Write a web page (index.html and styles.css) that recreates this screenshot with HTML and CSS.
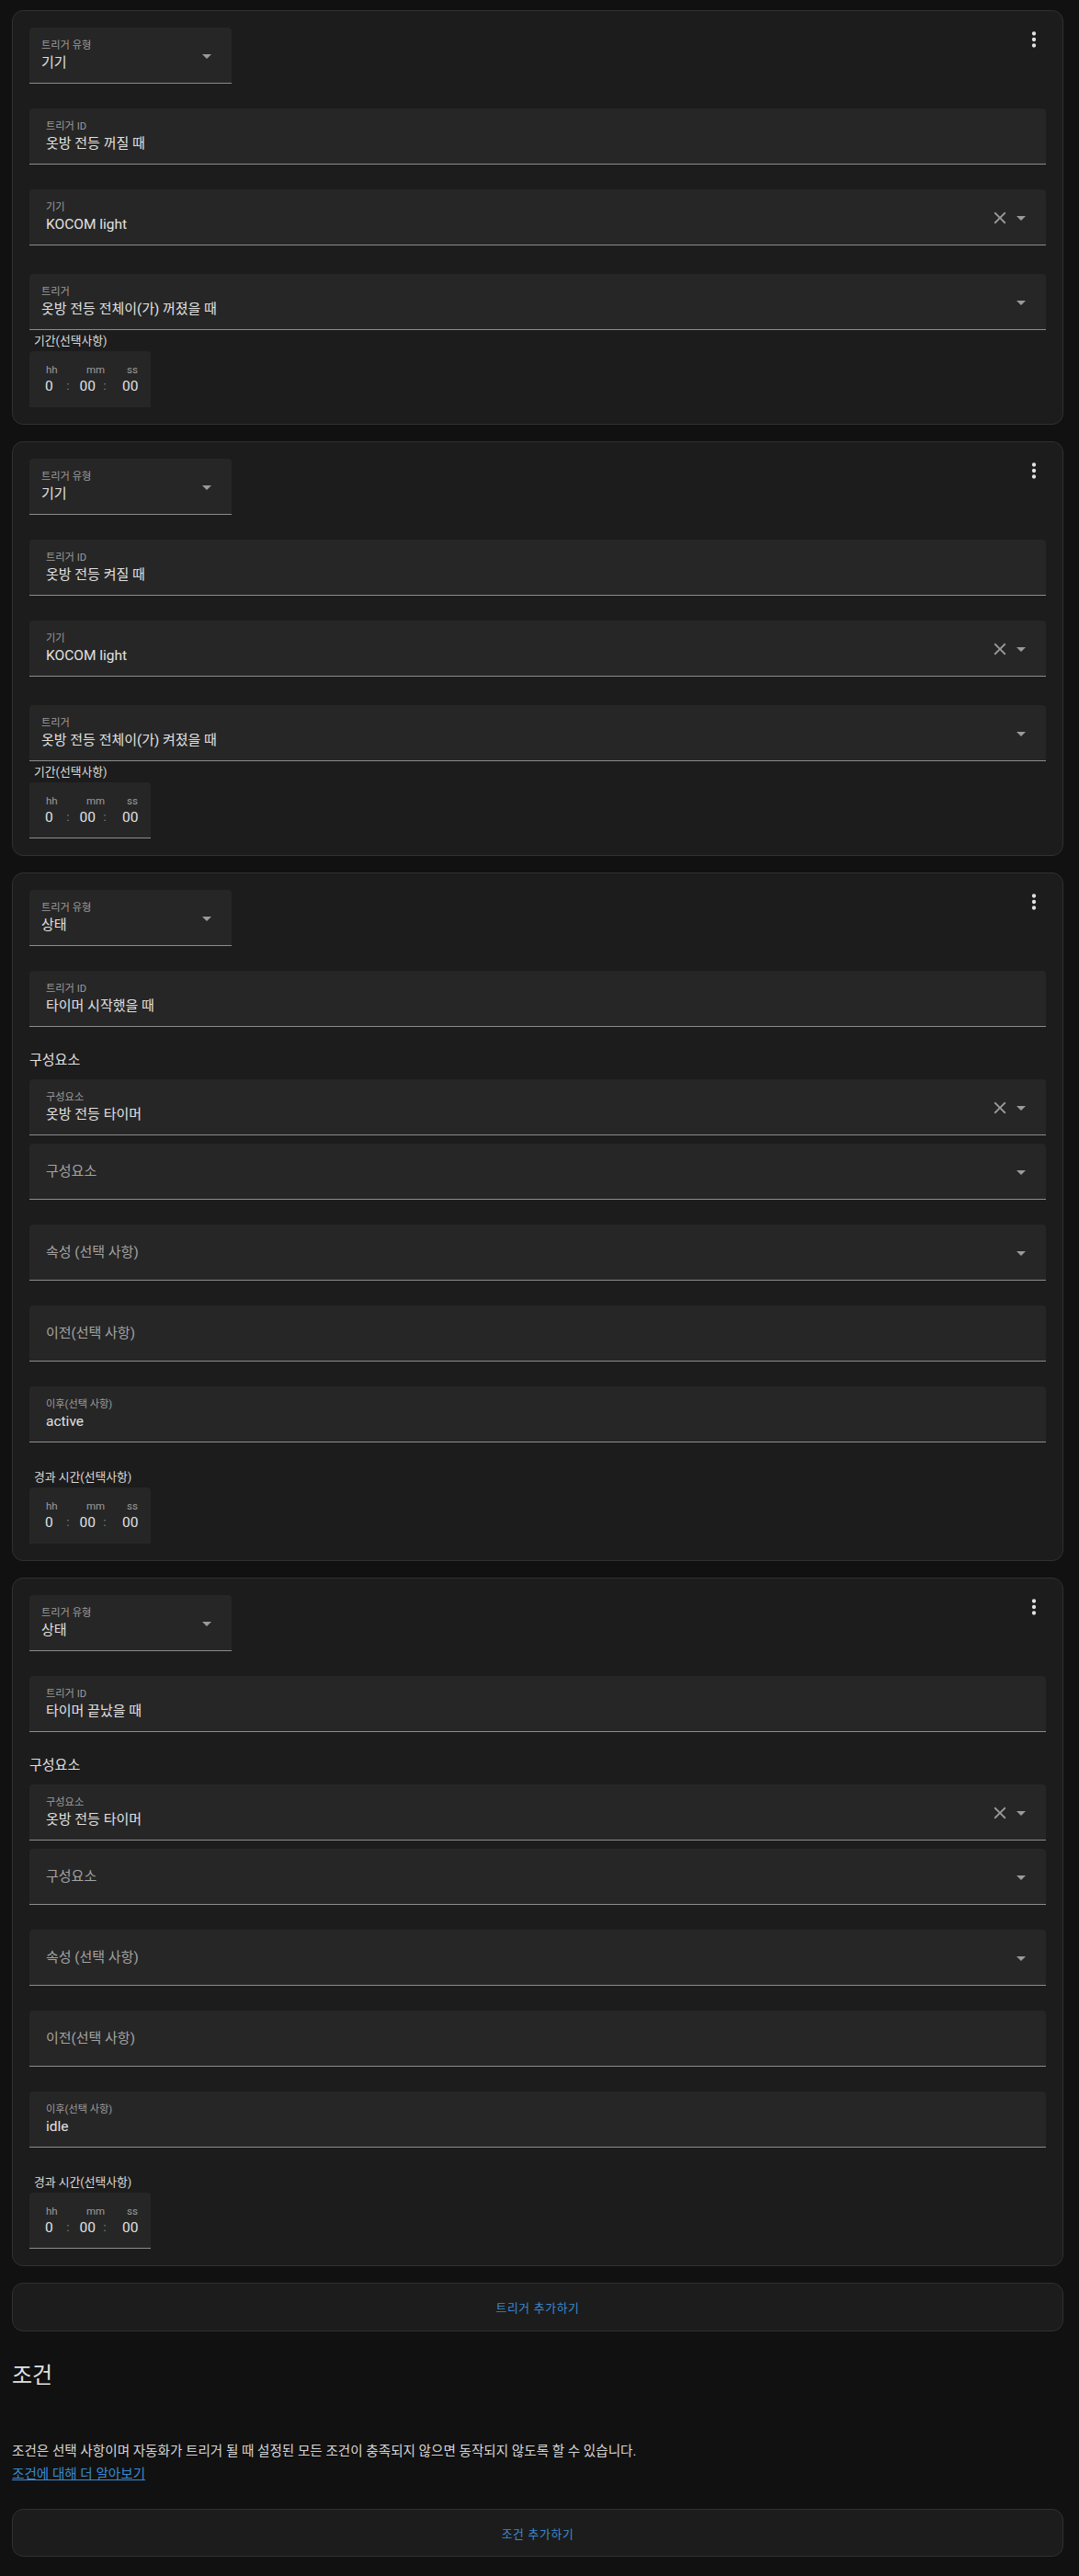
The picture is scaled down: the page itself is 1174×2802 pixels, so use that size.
FILE: index.html
```html
<!DOCTYPE html>
<html lang="ko">
<head>
<meta charset="utf-8">
<title>트리거</title>
<link rel="stylesheet" href="styles.css">
</head>
<body>
<div class="page">
  <div class="triggers">

    <div class="card">
      <div class="card-head">
        <div class="field select type-select">
          <div class="field-text"><span class="label">트리거 유형</span><span class="value ko">기기</span></div>
          <span class="icons"><svg class="arrow" viewBox="0 0 24 24"><path d="M7 10l5 5 5-5z"/></svg></span>
        </div>
        <svg class="menu" viewBox="0 0 24 24"><path d="M12 16a2 2 0 1 1 0 4 2 2 0 0 1 0-4m0-6a2 2 0 1 1 0 4 2 2 0 0 1 0-4m0-6a2 2 0 1 1 0 4 2 2 0 0 1 0-4z"/></svg>
      </div>
      <div class="field">
        <div class="field-text"><span class="label">트리거 ID</span><span class="value ko">옷방 전등 꺼질 때</span></div>
      </div>
      <div class="field">
        <div class="field-text"><span class="label">기기</span><span class="value">KOCOM light</span></div>
        <span class="icons"><svg class="close" viewBox="0 0 24 24"><path d="M19 6.41 17.59 5 12 10.590 6.41 5 5 6.41 10.59 12 5 17.59 6.41 19 12 13.41 17.59 19 19 17.59 13.41 12z"/></svg><svg class="arrow" viewBox="0 0 24 24"><path d="M7 10l5 5 5-5z"/></svg></span>
      </div>
      <div class="field select loose">
        <div class="field-text"><span class="label">트리거</span><span class="value ko">옷방 전등 전체이(가) 꺼졌을 때</span></div>
        <span class="icons"><svg class="arrow" viewBox="0 0 24 24"><path d="M7 10l5 5 5-5z"/></svg></span>
      </div>
      <div class="dur-label">기간(선택사항)</div>
      <div class="dur">
        <div class="unit hh"><span class="u-label">hh</span><span class="u-val">0</span></div>
        <span class="sep">:</span>
        <div class="unit mm"><span class="u-label">mm</span><span class="u-val">00</span></div>
        <span class="sep">:</span>
        <div class="unit ss"><span class="u-label">ss</span><span class="u-val">00</span></div>
      </div>
    </div>

    <div class="card">
      <div class="card-head">
        <div class="field select type-select">
          <div class="field-text"><span class="label">트리거 유형</span><span class="value ko">기기</span></div>
          <span class="icons"><svg class="arrow" viewBox="0 0 24 24"><path d="M7 10l5 5 5-5z"/></svg></span>
        </div>
        <svg class="menu" viewBox="0 0 24 24"><path d="M12 16a2 2 0 1 1 0 4 2 2 0 0 1 0-4m0-6a2 2 0 1 1 0 4 2 2 0 0 1 0-4m0-6a2 2 0 1 1 0 4 2 2 0 0 1 0-4z"/></svg>
      </div>
      <div class="field">
        <div class="field-text"><span class="label">트리거 ID</span><span class="value ko">옷방 전등 켜질 때</span></div>
      </div>
      <div class="field">
        <div class="field-text"><span class="label">기기</span><span class="value">KOCOM light</span></div>
        <span class="icons"><svg class="close" viewBox="0 0 24 24"><path d="M19 6.41 17.59 5 12 10.59 6.41 5 5 6.41 10.59 12 5 17.59 6.41 19 12 13.41 17.59 19 19 17.59 13.41 12z"/></svg><svg class="arrow" viewBox="0 0 24 24"><path d="M7 10l5 5 5-5z"/></svg></span>
      </div>
      <div class="field select loose">
        <div class="field-text"><span class="label">트리거</span><span class="value ko">옷방 전등 전체이(가) 켜졌을 때</span></div>
        <span class="icons"><svg class="arrow" viewBox="0 0 24 24"><path d="M7 10l5 5 5-5z"/></svg></span>
      </div>
      <div class="dur-label">기간(선택사항)</div>
      <div class="dur underlined">
        <div class="unit hh"><span class="u-label">hh</span><span class="u-val">0</span></div>
        <span class="sep">:</span>
        <div class="unit mm"><span class="u-label">mm</span><span class="u-val">00</span></div>
        <span class="sep">:</span>
        <div class="unit ss"><span class="u-label">ss</span><span class="u-val">00</span></div>
      </div>
    </div>

    <div class="card">
      <div class="card-head">
        <div class="field select type-select">
          <div class="field-text"><span class="label">트리거 유형</span><span class="value ko">상태</span></div>
          <span class="icons"><svg class="arrow" viewBox="0 0 24 24"><path d="M7 10l5 5 5-5z"/></svg></span>
        </div>
        <svg class="menu" viewBox="0 0 24 24"><path d="M12 16a2 2 0 1 1 0 4 2 2 0 0 1 0-4m0-6a2 2 0 1 1 0 4 2 2 0 0 1 0-4m0-6a2 2 0 1 1 0 4 2 2 0 0 1 0-4z"/></svg>
      </div>
      <div class="field">
        <div class="field-text"><span class="label">트리거 ID</span><span class="value ko">타이머 시작했을 때</span></div>
      </div>
      <div class="section-title">구성요소</div>
      <div class="field after-title">
        <div class="field-text"><span class="label">구성요소</span><span class="value ko">옷방 전등 타이머</span></div>
        <span class="icons"><svg class="close" viewBox="0 0 24 24"><path d="M19 6.41 17.59 5 12 10.59 6.41 5 5 6.41 10.59 12 5 17.59 6.41 19 12 13.41 17.59 19 19 17.59 13.41 12z"/></svg><svg class="arrow" viewBox="0 0 24 24"><path d="M7 10l5 5 5-5z"/></svg></span>
      </div>
      <div class="field tight">
        <div class="field-text placeholder"><span class="ph">구성요소</span></div>
        <span class="icons"><svg class="arrow" viewBox="0 0 24 24"><path d="M7 10l5 5 5-5z"/></svg></span>
      </div>
      <div class="field">
        <div class="field-text placeholder"><span class="ph">속성 (선택 사항)</span></div>
        <span class="icons"><svg class="arrow" viewBox="0 0 24 24"><path d="M7 10l5 5 5-5z"/></svg></span>
      </div>
      <div class="field">
        <div class="field-text placeholder"><span class="ph">이전(선택 사항)</span></div>
      </div>
      <div class="field">
        <div class="field-text"><span class="label">이후(선택 사항)</span><span class="value">active</span></div>
      </div>
      <div class="dur-label spaced">경과 시간(선택사항)</div>
      <div class="dur">
        <div class="unit hh"><span class="u-label">hh</span><span class="u-val">0</span></div>
        <span class="sep">:</span>
        <div class="unit mm"><span class="u-label">mm</span><span class="u-val">00</span></div>
        <span class="sep">:</span>
        <div class="unit ss"><span class="u-label">ss</span><span class="u-val">00</span></div>
      </div>
    </div>

    <div class="card">
      <div class="card-head">
        <div class="field select type-select">
          <div class="field-text"><span class="label">트리거 유형</span><span class="value ko">상태</span></div>
          <span class="icons"><svg class="arrow" viewBox="0 0 24 24"><path d="M7 10l5 5 5-5z"/></svg></span>
        </div>
        <svg class="menu" viewBox="0 0 24 24"><path d="M12 16a2 2 0 1 1 0 4 2 2 0 0 1 0-4m0-6a2 2 0 1 1 0 4 2 2 0 0 1 0-4m0-6a2 2 0 1 1 0 4 2 2 0 0 1 0-4z"/></svg>
      </div>
      <div class="field">
        <div class="field-text"><span class="label">트리거 ID</span><span class="value ko">타이머 끝났을 때</span></div>
      </div>
      <div class="section-title">구성요소</div>
      <div class="field after-title">
        <div class="field-text"><span class="label">구성요소</span><span class="value ko">옷방 전등 타이머</span></div>
        <span class="icons"><svg class="close" viewBox="0 0 24 24"><path d="M19 6.41 17.59 5 12 10.59 6.41 5 5 6.41 10.59 12 5 17.59 6.41 19 12 13.41 17.59 19 19 17.59 13.41 12z"/></svg><svg class="arrow" viewBox="0 0 24 24"><path d="M7 10l5 5 5-5z"/></svg></span>
      </div>
      <div class="field tight">
        <div class="field-text placeholder"><span class="ph">구성요소</span></div>
        <span class="icons"><svg class="arrow" viewBox="0 0 24 24"><path d="M7 10l5 5 5-5z"/></svg></span>
      </div>
      <div class="field">
        <div class="field-text placeholder"><span class="ph">속성 (선택 사항)</span></div>
        <span class="icons"><svg class="arrow" viewBox="0 0 24 24"><path d="M7 10l5 5 5-5z"/></svg></span>
      </div>
      <div class="field">
        <div class="field-text placeholder"><span class="ph">이전(선택 사항)</span></div>
      </div>
      <div class="field">
        <div class="field-text"><span class="label">이후(선택 사항)</span><span class="value">idle</span></div>
      </div>
      <div class="dur-label spaced">경과 시간(선택사항)</div>
      <div class="dur underlined">
        <div class="unit hh"><span class="u-label">hh</span><span class="u-val">0</span></div>
        <span class="sep">:</span>
        <div class="unit mm"><span class="u-label">mm</span><span class="u-val">00</span></div>
        <span class="sep">:</span>
        <div class="unit ss"><span class="u-label">ss</span><span class="u-val">00</span></div>
      </div>
    </div>

    <div class="add-btn">트리거 추가하기</div>
  </div>

  <div class="conditions">
    <h2 class="sec-heading">조건</h2>
    <p class="desc">조건은 선택 사항이며 자동화가 트리거 될 때 설정된 모든 조건이 충족되지 않으면 동작되지 않도록 할 수 있습니다.</p>
    <a class="learn" href="#">조건에 대해 더 알아보기</a>
    <div class="add-btn cond-btn">조건 추가하기</div>
  </div>
</div>
</body>
</html>
```

FILE: styles.css
```css
html, body {
  margin: 0;
  padding: 0;
  background: #111111;
}

body {
  font-family: Roboto, "Noto Sans CJK KR", sans-serif;
  color: #e1e1e1;
}

.page {
  padding: 11px 17px 21px 13px;
}

.triggers {
  display: flex;
  flex-direction: column;
  gap: 18px;
}

.card {
  background: #1c1c1c;
  border: 1px solid #303030;
  border-radius: 12px;
  padding: 18px;
  display: flex;
  flex-direction: column;
}

.card-head {
  display: flex;
  justify-content: space-between;
  align-items: flex-start;
}

.menu {
  width: 26px;
  height: 26px;
  fill: #e1e1e1;
  flex: none;
}

.field {
  display: flex;
  align-items: center;
  height: 61px;
  box-sizing: border-box;
  background: #262626;
  border-radius: 4px 4px 0 0;
  border-bottom: 1px solid #8c8c8c;
  padding: 0 15px 0 18px;
  margin-top: 27px;
}

.card-head .field {
  margin-top: 0;
}

.field.select {
  padding-left: 13px;
}

.field.loose {
  margin-top: 31px;
}

.field.tight {
  margin-top: 9px;
}

.field.after-title {
  margin-top: 11px;
}

.type-select {
  width: 220px;
}

.field-text {
  flex: 1;
  align-self: stretch;
  display: flex;
  flex-direction: column;
  padding-top: 12px;
  min-width: 0;
}

.field-text.placeholder {
  padding-top: 0;
  justify-content: center;
}

.label {
  font-size: 11.2px;
  line-height: 16px;
  color: #9c9c9c;
  white-space: nowrap;
}

.value {
  font-size: 15.5px;
  line-height: 20px;
  color: #e1e1e1;
  white-space: nowrap;
}

.value.ko {
  font-size: 15px;
}

.ph {
  font-size: 15px;
  line-height: 20px;
  color: #a3a3a3;
  white-space: nowrap;
}

.icons {
  display: flex;
  align-items: center;
  margin-top: 2px;
  flex: none;
}

.arrow {
  width: 24px;
  height: 24px;
  fill: #9a9a9a;
}

.close {
  width: 22px;
  height: 22px;
  fill: #9a9a9a;
}

.section-title {
  margin-top: 26px;
  font-size: 15px;
  line-height: 20px;
  color: #e1e1e1;
}

.dur-label {
  font-size: 12.8px;
  line-height: 23px;
  color: #dadada;
  padding-left: 5px;
}

.dur-label.spaced {
  margin-top: 26px;
}

.dur {
  display: flex;
  width: 132px;
  height: 61px;
  box-sizing: border-box;
  background: #262626;
  border-radius: 4px 4px 0 0;
}

.dur.underlined {
  border-bottom: 1px solid #8c8c8c;
}

.unit {
  display: flex;
  flex-direction: column;
  padding-top: 12px;
}

.u-label {
  font-size: 11.5px;
  line-height: 16px;
  color: #9c9c9c;
}

.u-val {
  font-size: 15.5px;
  line-height: 21px;
  color: #e1e1e1;
}

.unit.hh {
  width: 37px;
}

.hh .u-label {
  padding-left: 18px;
}

.hh .u-val {
  padding-left: 17px;
}

.unit.mm {
  width: 30px;
}

.mm .u-label {
  padding-left: 15px;
}

.mm .u-val {
  padding-left: 7.5px;
}

.unit.ss {
  flex: 1;
}

.ss .u-label {
  padding-left: 19px;
}

.ss .u-val {
  padding-left: 14px;
}

.sep {
  width: 10px;
  text-align: center;
  padding-top: 28px;
  line-height: 21px;
  font-size: 12px;
  color: #8a8a8a;
}

.add-btn {
  height: 53px;
  box-sizing: border-box;
  border: 1px solid #303030;
  border-radius: 12px;
  background: #1c1c1c;
  display: flex;
  align-items: center;
  justify-content: center;
  color: #3a8ad0;
  font-size: 12.8px;
  letter-spacing: 0.7px;
}

.conditions {
  display: flex;
  flex-direction: column;
  align-items: flex-start;
}

.sec-heading {
  margin: 32px 0 0;
  font-size: 24px;
  line-height: 32px;
  font-weight: 400;
  color: #e1e1e1;
}

.desc {
  margin: 54px 0 0;
  font-size: 14.6px;
  line-height: 25px;
  color: #d6d6d6;
}

.learn {
  font-size: 14.6px;
  line-height: 25px;
  color: #3a8ad0;
  text-decoration: underline;
}

.cond-btn {
  margin-top: 25px;
  align-self: stretch;
  height: 52px;
}
```
